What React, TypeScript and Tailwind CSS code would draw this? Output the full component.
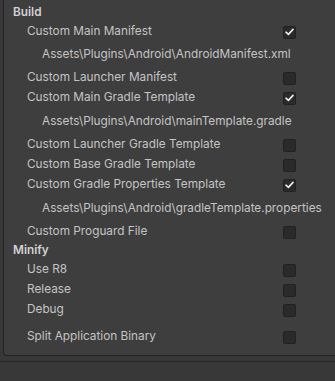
type Row =
  | { kind: "header"; label: string; h: string }
  | { kind: "toggle"; label: string; checked: boolean }
  | { kind: "path"; label: string; h: string }
  | { kind: "gap"; h: string };

const rows: Row[] = [
  { kind: "header", label: "Build", h: "h-[19px]" },
  { kind: "toggle", label: "Custom Main Manifest", checked: true },
  { kind: "path", label: "Assets\\Plugins\\Android\\AndroidManifest.xml", h: "h-[26px]" },
  { kind: "toggle", label: "Custom Launcher Manifest", checked: false },
  { kind: "toggle", label: "Custom Main Gradle Template", checked: true },
  { kind: "path", label: "Assets\\Plugins\\Android\\mainTemplate.gradle", h: "h-[27px]" },
  { kind: "toggle", label: "Custom Launcher Gradle Template", checked: false },
  { kind: "toggle", label: "Custom Base Gradle Template", checked: false },
  { kind: "toggle", label: "Custom Gradle Properties Template", checked: true },
  { kind: "path", label: "Assets\\Plugins\\Android\\gradleTemplate.properties", h: "h-[27px]" },
  { kind: "toggle", label: "Custom Proguard File", checked: false },
  { kind: "header", label: "Minify", h: "h-[18px]" },
  { kind: "toggle", label: "Use R8", checked: false },
  { kind: "toggle", label: "Release", checked: false },
  { kind: "toggle", label: "Debug", checked: false },
  { kind: "gap", h: "h-[7px]" },
  { kind: "toggle", label: "Split Application Binary", checked: false },
];

function Checkbox({ checked }: { checked: boolean }) {
  return (
    <span className="flex h-[13px] w-[13px] items-center justify-center rounded-[2px] border border-[#212121] bg-[#2a2a2a]">
      {checked && (
        <svg width="9" height="8" viewBox="0 0 9 8" aria-hidden>
          <path d="M1 4.2 L3.4 6.4 L8 1.4" fill="none" stroke="#eeeeee" strokeWidth="1.6" strokeLinecap="round" strokeLinejoin="round" />
        </svg>
      )}
    </span>
  );
}

export default function App() {
  return (
    <div className="h-[381px] w-[335px] overflow-hidden bg-[#383838] font-[Inter,'Noto_Sans',sans-serif] text-[11.8px] text-[#c4c4c4]">
      <div className="ml-[3px] rounded-bl-[4px] border-b border-l border-[#242424] bg-[#3e3e3e] pt-[3px] pb-[8px]">
        {rows.map((r, i) => {
          if (r.kind === "gap") return <div key={i} className={r.h} />;
          if (r.kind === "header")
            return (
              <div key={i} className={`${r.h} flex items-center pl-[9px] font-semibold text-[#d2d2d2]`}>
                {r.label}
              </div>
            );
          if (r.kind === "path")
            return (
              <div key={i} className={`${r.h} flex items-center pl-[38px] whitespace-nowrap`}>
                {r.label}
              </div>
            );
          return (
            <div key={i} className="flex h-[20px] items-center pl-[23px]">
              <span className="w-[256px] whitespace-nowrap">{r.label}</span>
              <Checkbox checked={r.checked} />
            </div>
          );
        })}
      </div>
      <div className="mt-[5px] h-px bg-[#262626]" />
    </div>
  );
}
